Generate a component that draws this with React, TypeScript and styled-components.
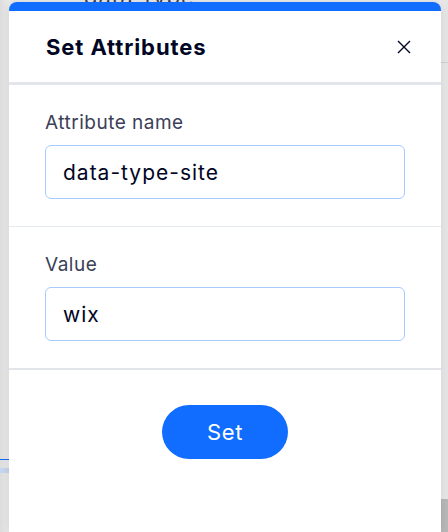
import * as React from 'react'
import styled, { createGlobalStyle } from 'styled-components'

const GlobalStyle = createGlobalStyle`
  html, body {
    margin: 0;
    padding: 0;
    background: #e6e6e6;
    font-family: Inter, "Noto Sans", Arial, sans-serif;
  }
`;

const Page = styled.div`
  position: relative;
  width: 448px;
  height: 532px;
  overflow: hidden;
  background: linear-gradient(90deg, #dcdcdc 0px, #ececec 9px, #ececec 440px, #e4e4e4 448px);
`;

const BehindText = styled.div`
  position: absolute;
  left: 84px;
  top: -16px;
  font-size: 22px;
  color: #3b4057;
  letter-spacing: 1px;
`;

const BehindLine = styled.div<{ $top: number; $left: number; $width: number; $color: string; $h?: number }>`
  position: absolute;
  top: ${p => p.$top}px;
  left: ${p => p.$left}px;
  width: ${p => p.$width}px;
  height: ${p => p.$h ?? 1}px;
  background: ${p => p.$color};
`;

const Modal = styled.div`
  position: absolute;
  left: 9px;
  top: 2px;
  width: 432px;
  bottom: 0;
  background: #fff;
  border-radius: 8px 8px 0 0;
  box-shadow: 0 0 8px rgba(0, 0, 0, 0.12);
  display: flex;
  flex-direction: column;
  overflow: hidden;
  border-top: 9px solid #116dff;
`;

const Header = styled.div`
  height: 71px;
  display: flex;
  align-items: center;
  justify-content: space-between;
  padding: 0 28px 0 37px;
  border-bottom: 3px solid #e2e5ea;
`;

const Title = styled.h2`
  margin: 0;
  font-size: 22px;
  font-weight: 700;
  color: #000624;
  letter-spacing: 0.9px;
`;

const CloseButton = styled.button`
  border: none;
  background: none;
  padding: 0;
  width: 18px;
  height: 18px;
  display: flex;
  align-items: center;
  justify-content: center;
  color: #000624;
  cursor: pointer;
`;

const Section = styled.div<{ $last?: boolean }>`
  padding: 26px 36px 27px 36px;
  border-bottom: ${p => (p.$last ? '2px solid #e2e5ea' : '1px solid #e5eaf0')};
  display: flex;
  flex-direction: column;
  gap: 10px;
`;

const Label = styled.label`
  font-size: 19px;
  color: #3b4057;
  line-height: 24px;
  letter-spacing: 0.5px;
`;

const Input = styled.input`
  box-sizing: border-box;
  width: 360px;
  height: 54px;
  border: 1px solid #a8caff;
  border-radius: 6px;
  padding: 0 17px;
  font-family: inherit;
  font-size: 21px;
  letter-spacing: 1px;
  color: #000624;
  outline: none;
  background: #fff;
`;

const Footer = styled.div`
  display: flex;
  justify-content: center;
  padding-top: 35px;
`;

const SetButton = styled.button`
  width: 126px;
  height: 54px;
  border: none;
  border-radius: 27px;
  background: #116dff;
  color: #fff;
  font-family: inherit;
  font-size: 22px;
  letter-spacing: 0.6px;
  cursor: pointer;
`;

export default function App() {
  return (
    <Page>
      <GlobalStyle />
      <BehindText>data-type</BehindText>
      <BehindLine $top={62} $left={441} $width={7} $color="#cfcfcf" />
      <BehindLine $top={459} $left={0} $width={9} $color="#116dff" />
      <BehindLine $top={468} $left={0} $width={9} $color="#c5d6ee" $h={5} />
      <BehindLine $top={499} $left={441} $width={7} $color="#b8b8b8" $h={33} />
      <Modal>
        <Header>
          <Title>Set Attributes</Title>
          <CloseButton aria-label="Close">
            <svg width="16" height="16" viewBox="0 0 16 16" fill="none">
              <path d="M2 2L14 14M14 2L2 14" stroke="currentColor" strokeWidth="1.4" />
            </svg>
          </CloseButton>
        </Header>
        <Section>
          <Label>Attribute name</Label>
          <Input defaultValue="data-type-site" />
        </Section>
        <Section $last>
          <Label>Value</Label>
          <Input defaultValue="wix" />
        </Section>
        <Footer>
          <SetButton>Set</SetButton>
        </Footer>
      </Modal>
    </Page>
  );
}
